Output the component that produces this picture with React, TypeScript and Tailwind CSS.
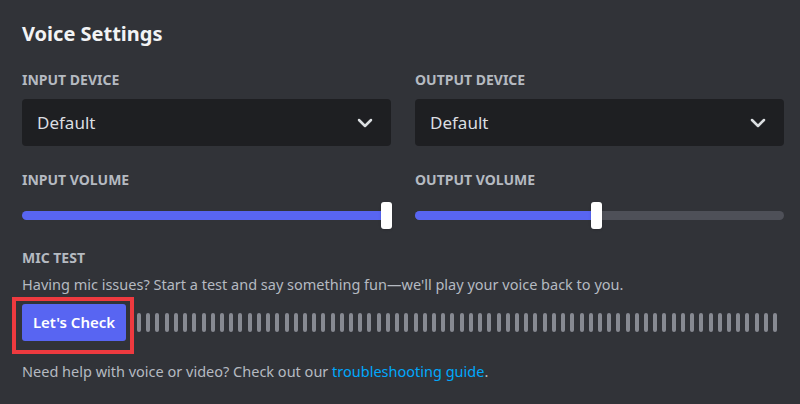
import React from 'react';
import { ChevronDown } from 'lucide-react';

const Label = ({ children, className = '' }: { children: React.ReactNode; className?: string }) => (
  <div className={`text-[14px] leading-[18px] font-bold uppercase text-[#b5bac1] ${className}`}>
    {children}
  </div>
);

const Select = ({ value }: { value: string }) => (
  <div className="mt-[10px] h-[47px] rounded-[4px] bg-[#1e1f22] flex items-center justify-between pl-[15px] pr-[14px]">
    <span className="text-[17px] text-[#dbdee1]">{value}</span>
    <ChevronDown size={24} strokeWidth={2.5} className="text-[#dbdee1]" />
  </div>
);

const Slider = ({ percent, full }: { percent: number; full?: boolean }) => (
  <div className="mt-[13px] h-[27px] relative flex items-center">
    <div className={`w-full h-[9px] rounded-full ${full ? 'bg-[#5865f2]' : 'bg-[#4e5058]'} overflow-hidden`}>
      <div className="h-full bg-[#5865f2]" style={{ width: `${percent}%` }} />
    </div>
    <div
      className="absolute top-0 w-[11px] h-[27px] rounded-[3px] bg-white shadow"
      style={{ left: `calc(${percent}% - 5px)` }}
    />
  </div>
);

export default function App() {
  const bars = Array.from({ length: 70 });
  return (
    <div
      className="w-[800px] h-[404px] bg-[#313338] px-[22px] pt-[19px] overflow-hidden"
      style={{ fontFamily: '"Noto Sans", sans-serif' }}
    >
      <h1 className="text-[20px] leading-[30px] font-bold text-[#f2f3f5]">Voice Settings</h1>

      <div className="w-[762px] grid grid-cols-2 gap-x-[24px]">
        <div>
          <Label className="mt-[22px]">Input Device</Label>
          <Select value="Default" />
          <Label className="mt-[25px]">Input Volume</Label>
          <div className="pr-[5px]">
            <Slider percent={100} full />
          </div>
        </div>
        <div>
          <Label className="mt-[22px]">Output Device</Label>
          <Select value="Default" />
          <Label className="mt-[25px]">Output Volume</Label>
          <Slider percent={49} />
        </div>
      </div>

      <Label className="mt-[20px]">Mic Test</Label>
      <p className="mt-[7px] text-[14.5px] leading-[20px] text-[#b5bac1]">
        Having mic issues? Start a test and say something fun—we'll play your voice back to you.
      </p>

      <div className="mt-[10px] flex items-center">
        <div className="relative">
          <button className="w-[104px] h-[37px] rounded-[3px] bg-[#5865f2] text-white text-[15px] font-semibold">
            Let's Check
          </button>
          <div className="absolute left-[-10px] top-[-7px] w-[122px] h-[57px] border-[4px] border-[#ee3a3f] pointer-events-none" />
        </div>
        <div className="ml-[11px] w-[643px] flex justify-between items-center">
          {bars.map((_, i) => (
            <div key={i} className="w-[4px] h-[19px] rounded-full bg-[#878a92]" />
          ))}
        </div>
      </div>

      <p className="mt-[20px] text-[14.5px] leading-[20px] text-[#b5bac1]">
        Need help with voice or video? Check out our{' '}
        <span className="text-[#00a8fc]">troubleshooting guide</span>.
      </p>
    </div>
  );
}
